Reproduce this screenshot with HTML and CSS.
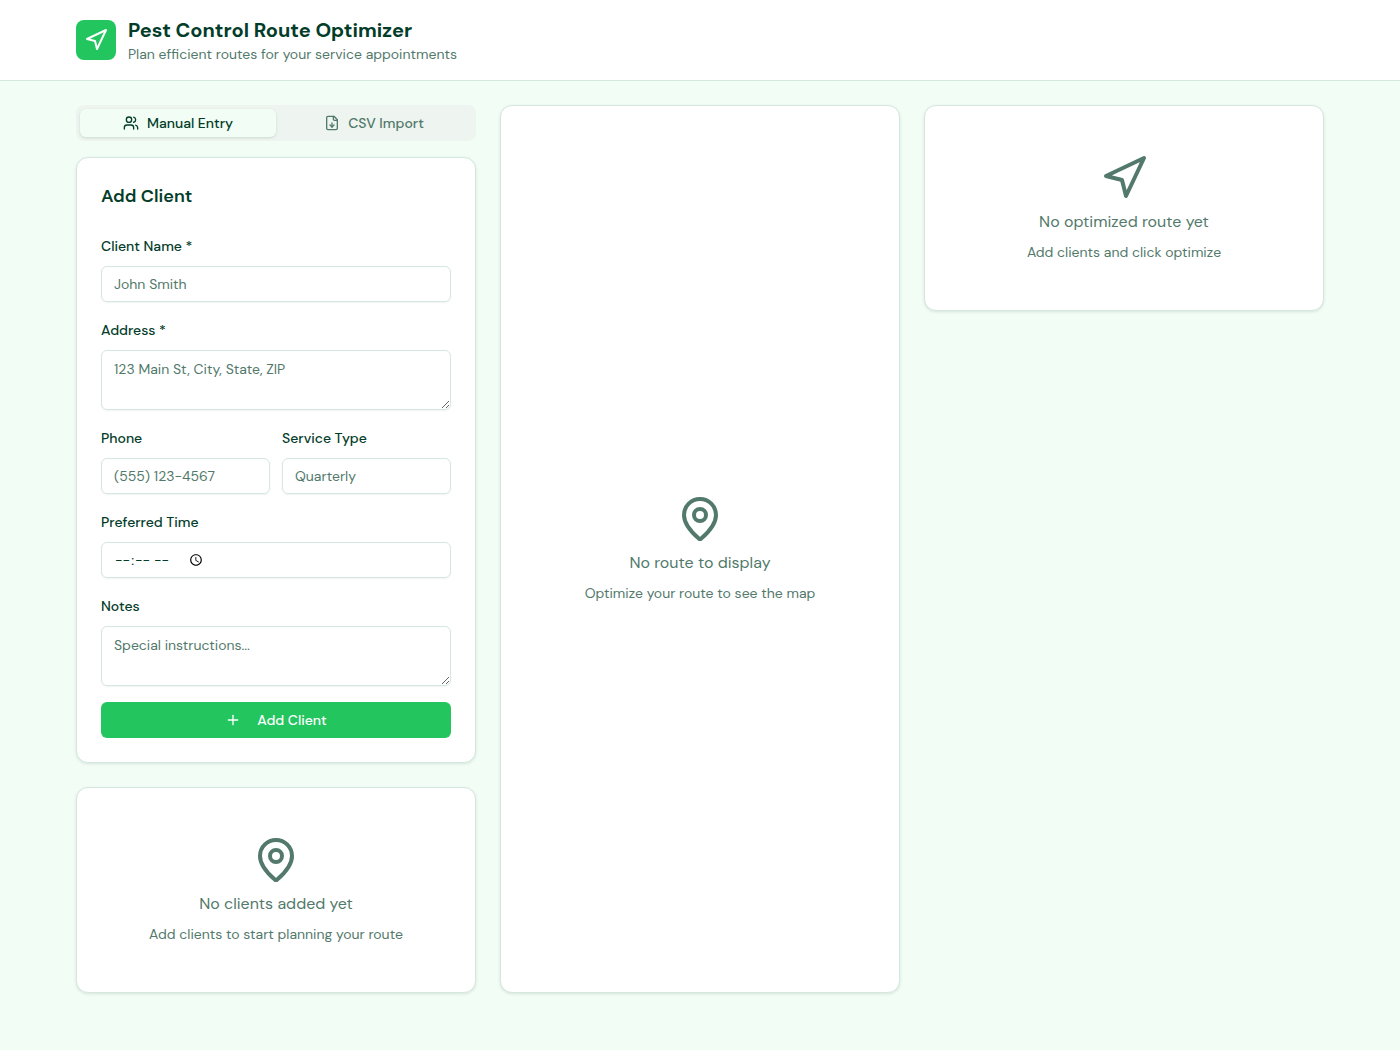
FILE: index.html
```html
<!DOCTYPE html>
<html lang="en">
<head>
    <meta charset="UTF-8">
    <meta name="viewport" content="width=device-width, initial-scale=1.0">
    <title>Pest Control Route Optimizer</title>
    <link rel="stylesheet" href="styles.css">
</head>
<body>

<header class="site-header">
    <div class="container brand">
        <div class="logo">
            <svg class="icon icon-md" viewBox="0 0 24 24"><polygon points="3 11 22 2 13 21 11 13 3 11"/></svg>
        </div>
        <div>
            <h1>Pest Control Route Optimizer</h1>
            <p class="tagline">Plan efficient routes for your service appointments</p>
        </div>
    </div>
</header>

<main class="container columns">

    <!-- Clients -->
    <section class="clients">
        <div class="entry">
            <div class="tabs" role="tablist">
                <button type="button" class="tab active" role="tab" aria-selected="true">
                    <svg class="icon" viewBox="0 0 24 24"><path d="M16 21v-2a4 4 0 0 0-4-4H6a4 4 0 0 0-4 4v2"/><circle cx="9" cy="7" r="4"/><path d="M22 21v-2a4 4 0 0 0-3-3.87"/><path d="M16 3.13a4 4 0 0 1 0 7.75"/></svg>
                    Manual Entry
                </button>
                <button type="button" class="tab" role="tab" aria-selected="false">
                    <svg class="icon" viewBox="0 0 24 24"><path d="M15 2H6a2 2 0 0 0-2 2v16a2 2 0 0 0 2 2h12a2 2 0 0 0 2-2V7Z"/><path d="M14 2v4a2 2 0 0 0 2 2h4"/><path d="M12 18v-6"/><path d="m9 15 3 3 3-3"/></svg>
                    CSV Import
                </button>
            </div>

            <div class="card form-card">
                <h2>Add Client</h2>
                <form class="client-form">
                    <div class="field">
                        <label for="name">Client Name *</label>
                        <input type="text" id="name" name="name" placeholder="John Smith" required>
                    </div>
                    <div class="field">
                        <label for="address">Address *</label>
                        <textarea id="address" name="address" placeholder="123 Main St, City, State, ZIP" required></textarea>
                    </div>
                    <div class="field-row">
                        <div class="field">
                            <label for="phone">Phone</label>
                            <input type="tel" id="phone" name="phone" placeholder="(555) 123-4567">
                        </div>
                        <div class="field">
                            <label for="service">Service Type</label>
                            <input type="text" id="service" name="service" placeholder="Quarterly">
                        </div>
                    </div>
                    <div class="field">
                        <label for="time">Preferred Time</label>
                        <input type="time" id="time" name="time">
                    </div>
                    <div class="field">
                        <label for="notes">Notes</label>
                        <textarea id="notes" name="notes" placeholder="Special instructions..."></textarea>
                    </div>
                    <button type="submit" class="submit">
                        <svg class="icon" viewBox="0 0 24 24"><path d="M5 12h14"/><path d="M12 5v14"/></svg>
                        Add Client
                    </button>
                </form>
            </div>
        </div>

        <div class="card empty">
            <svg class="icon icon-lg" viewBox="0 0 24 24"><path d="M20 10c0 4.993-5.539 10.193-7.399 11.799a1 1 0 0 1-1.202 0C9.539 20.193 4 14.993 4 10a8 8 0 0 1 16 0"/><circle cx="12" cy="10" r="3"/></svg>
            <p>No clients added yet</p>
            <p class="hint">Add clients to start planning your route</p>
        </div>
    </section>

    <!-- Map -->
    <section class="card empty">
        <svg class="icon icon-lg" viewBox="0 0 24 24"><path d="M20 10c0 4.993-5.539 10.193-7.399 11.799a1 1 0 0 1-1.202 0C9.539 20.193 4 14.993 4 10a8 8 0 0 1 16 0"/><circle cx="12" cy="10" r="3"/></svg>
        <p>No route to display</p>
        <p class="hint">Optimize your route to see the map</p>
    </section>

    <!-- Optimized route -->
    <section class="card empty route">
        <svg class="icon icon-lg" viewBox="0 0 24 24"><polygon points="3 11 22 2 13 21 11 13 3 11"/></svg>
        <p>No optimized route yet</p>
        <p class="hint">Add clients and click optimize</p>
    </section>

</main>

</body>
</html>
```

FILE: styles.css
```css
:root {
    --background: #f2fdf5;
    --foreground: #033d2a;
    --muted: #eef5f0;
    --muted-text: #52796b;
    --border: #d5e7de;
    --primary: #22c55e;
}

* {
    box-sizing: border-box;
}

body {
    margin: 0;
    min-height: 100vh;
    font-family: "DM Sans", Inter, sans-serif;
    font-size: 16px;
    line-height: 24px;
    color: var(--foreground);
    background: var(--background);
}

h1, h2, p {
    margin: 0;
}

button, input, textarea {
    font-family: inherit;
    font-size: 14px;
    line-height: 20px;
    color: inherit;
}

.container {
    width: 100%;
    max-width: 1280px;
    margin: 0 auto;
    padding: 0 16px;
}

.icon {
    width: 16px;
    height: 16px;
    flex-shrink: 0;
    fill: none;
    stroke: currentColor;
    stroke-width: 2;
    stroke-linecap: round;
    stroke-linejoin: round;
}
.icon-md {
    width: 24px;
    height: 24px;
}
.icon-lg {
    width: 48px;
    height: 48px;
}

/* Header */
.site-header {
    padding: 16px 0;
    background: #fff;
    border-bottom: 1px solid var(--border);
}
.brand {
    display: flex;
    align-items: center;
    gap: 12px;
}
.logo {
    display: flex;
    padding: 8px;
    border-radius: 8px;
    color: #fff;
    background: var(--primary);
}
h1 {
    font-size: 20px;
    line-height: 28px;
    font-weight: 700;
}
.tagline {
    font-size: 14px;
    line-height: 20px;
    color: var(--muted-text);
}

/* Columns */
.columns {
    display: grid;
    grid-template-columns: repeat(3, minmax(0, 1fr));
    gap: 24px;
    padding: 24px 16px;
}
.clients {
    display: flex;
    flex-direction: column;
    gap: 24px;
}
.entry {
    display: flex;
    flex-direction: column;
    gap: 16px;
}
.card {
    background: #fff;
    border: 1px solid var(--border);
    border-radius: 12px;
    box-shadow: 0 1px 3px rgba(3, 61, 42, 0.12);
}

/* Tabs */
.tabs {
    display: grid;
    grid-template-columns: 1fr 1fr;
    padding: 4px;
    border-radius: 8px;
    background: var(--muted);
}
.tab {
    display: flex;
    align-items: center;
    justify-content: center;
    gap: 8px;
    padding: 4px 12px;
    border: none;
    border-radius: 6px;
    font-weight: 500;
    color: var(--muted-text);
    background: none;
    cursor: pointer;
}
.tab.active {
    color: var(--foreground);
    background: var(--background);
    box-shadow: 0 1px 3px rgba(3, 61, 42, 0.15);
}

/* Client form */
.form-card {
    padding: 24px;
}
h2 {
    margin-bottom: 24px;
    font-size: 18px;
    line-height: 28px;
    font-weight: 600;
}
.client-form {
    display: flex;
    flex-direction: column;
    gap: 16px;
}
.field {
    display: flex;
    flex-direction: column;
    gap: 8px;
}
.field-row {
    display: grid;
    grid-template-columns: repeat(2, minmax(0, 1fr));
    gap: 12px;
}
label {
    font-size: 14px;
    font-weight: 500;
}
input, textarea {
    width: 100%;
    padding: 8px 12px;
    border: 1px solid var(--border);
    border-radius: 6px;
    background: transparent;
    box-shadow: 0 1px 2px rgba(3, 61, 42, 0.06);
}
input {
    display: flex;
    height: 36px;
    padding: 4px 12px;
}
textarea {
    display: block;
    height: 60px;
    resize: vertical;
}
input::placeholder, textarea::placeholder {
    color: var(--muted-text);
    opacity: 1;
}
input:focus, textarea:focus {
    outline: 1px solid var(--primary);
}
.submit {
    display: flex;
    align-items: center;
    justify-content: center;
    gap: 16px;
    padding: 8px 16px;
    border: none;
    border-radius: 6px;
    font-weight: 500;
    color: #fff;
    background: var(--primary);
    cursor: pointer;
}
.submit:hover {
    background: #1fb455;
}

/* Empty states */
.empty {
    display: flex;
    flex-direction: column;
    align-items: center;
    justify-content: center;
    gap: 8px;
    padding: 48px 24px;
    text-align: center;
    color: var(--muted-text);
}
.empty .hint {
    font-size: 14px;
    line-height: 20px;
}
.route {
    align-self: start;
}

@media (max-width: 900px) {
    .columns {
        grid-template-columns: 1fr;
    }
}
```
